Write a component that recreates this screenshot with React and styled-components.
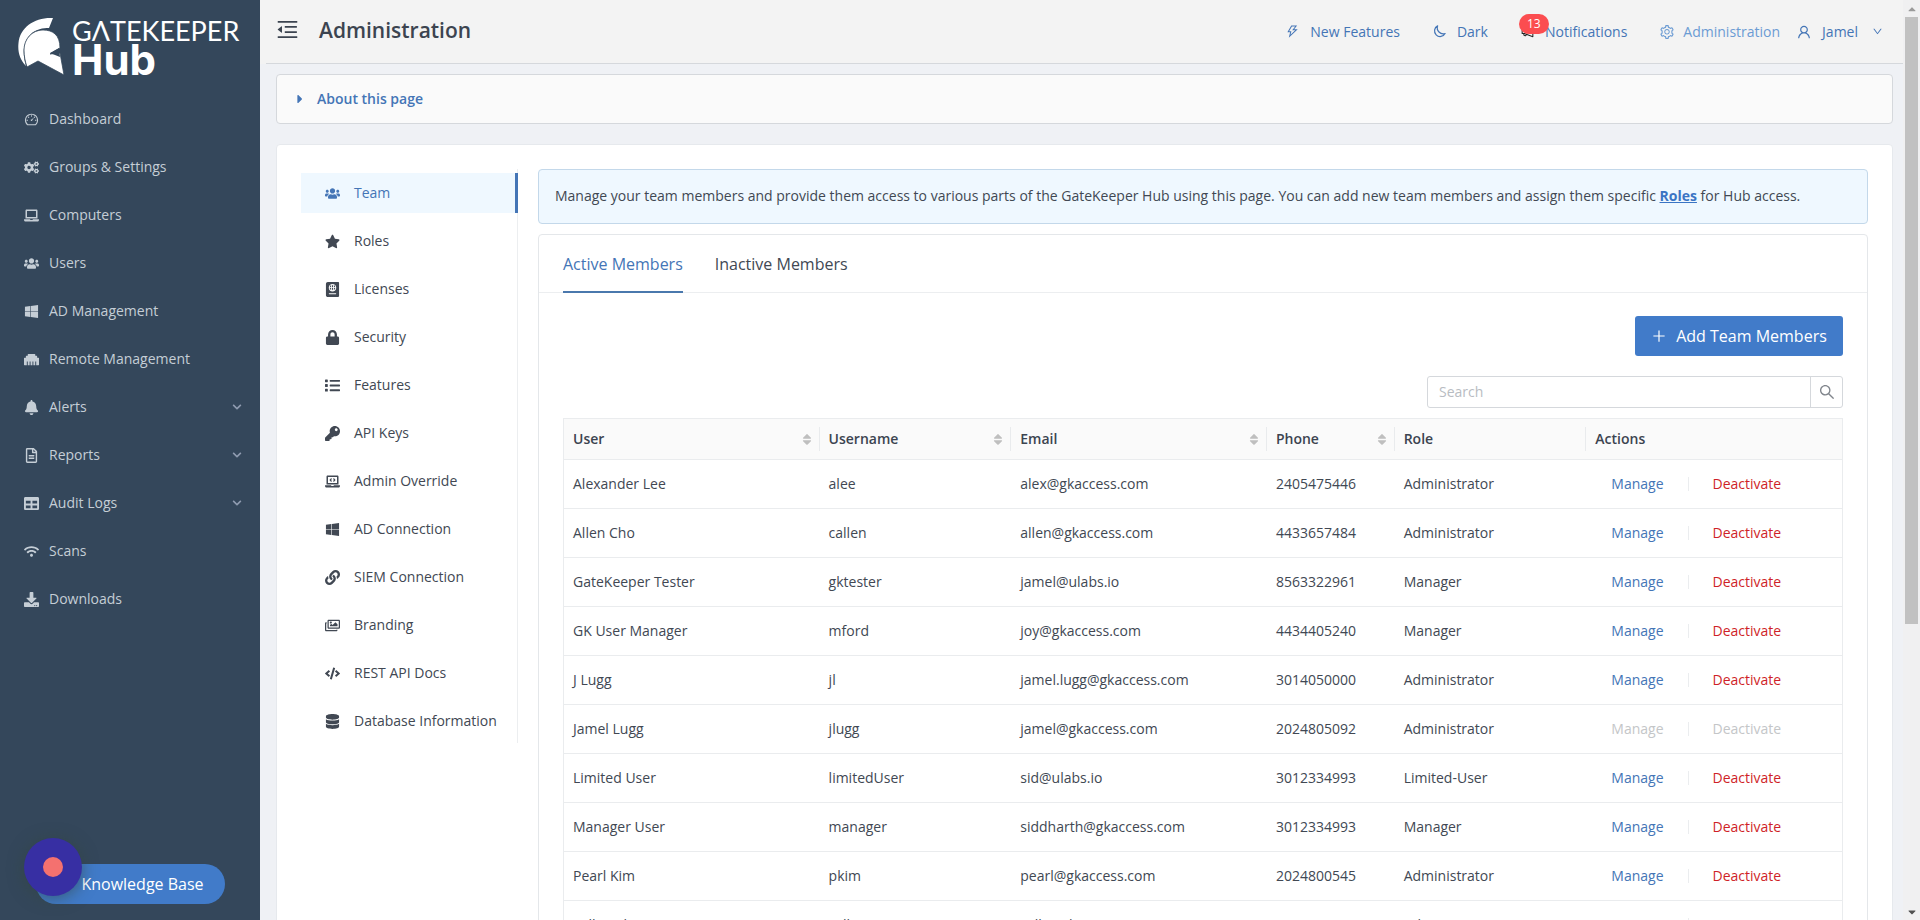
import React, { useState } from "react";
import styled, { createGlobalStyle } from "styled-components";
import {
  AiOutlineDashboard,
  AiOutlineDown,
  AiOutlineMenuFold,
  AiOutlineNotification,
  AiOutlinePlus,
  AiOutlineSearch,
  AiOutlineSetting,
  AiOutlineThunderbolt,
  AiOutlineUser,
} from "react-icons/ai";
import {
  FaBell,
  FaCaretDown,
  FaCaretRight,
  FaCaretUp,
  FaChevronDown,
  FaCode,
  FaCogs,
  FaDatabase,
  FaDownload,
  FaEthernet,
  FaKey,
  FaLaptop,
  FaLaptopCode,
  FaLink,
  FaList,
  FaLock,
  FaPassport,
  FaRegFileAlt,
  FaRegImages,
  FaStar,
  FaTable,
  FaUsers,
  FaWifi,
  FaWindows,
} from "react-icons/fa";

const navItems = [
  { label: "Dashboard", icon: AiOutlineDashboard },
  { label: "Groups & Settings", icon: FaCogs },
  { label: "Computers", icon: FaLaptop },
  { label: "Users", icon: FaUsers },
  { label: "AD Management", icon: FaWindows },
  { label: "Remote Management", icon: FaEthernet },
  { label: "Alerts", icon: FaBell, sub: true },
  { label: "Reports", icon: FaRegFileAlt, sub: true },
  { label: "Audit Logs", icon: FaTable, sub: true },
  { label: "Scans", icon: FaWifi },
  { label: "Downloads", icon: FaDownload },
];

const adminItems = [
  { label: "Team", icon: FaUsers },
  { label: "Roles", icon: FaStar },
  { label: "Licenses", icon: FaPassport },
  { label: "Security", icon: FaLock },
  { label: "Features", icon: FaList },
  { label: "API Keys", icon: FaKey },
  { label: "Admin Override", icon: FaLaptopCode },
  { label: "AD Connection", icon: FaWindows },
  { label: "SIEM Connection", icon: FaLink },
  { label: "Branding", icon: FaRegImages },
  { label: "REST API Docs", icon: FaCode },
  { label: "Database Information", icon: FaDatabase },
];

const columns = [
  { label: "User", width: "20%", sort: true },
  { label: "Username", width: "15%", sort: true },
  { label: "Email", width: "20%", sort: true },
  { label: "Phone", width: "10%", sort: true },
  { label: "Role", width: "15%" },
  { label: "Actions", width: "20%" },
];

const members = [
  ["Alexander Lee", "alee", "alex@gkaccess.com", "2405475446", "Administrator"],
  ["Allen Cho", "callen", "allen@gkaccess.com", "4433657484", "Administrator"],
  ["GateKeeper Tester", "gktester", "jamel@ulabs.io", "8563322961", "Manager"],
  ["GK User Manager", "mford", "joy@gkaccess.com", "4434405240", "Manager"],
  ["J Lugg", "jl", "jamel.lugg@gkaccess.com", "3014050000", "Administrator"],
  ["Jamel Lugg", "jlugg", "jamel@gkaccess.com", "2024805092", "Administrator"],
  ["Limited User", "limitedUser", "sid@ulabs.io", "3012334993", "Limited-User"],
  ["Manager User", "manager", "siddharth@gkaccess.com", "3012334993", "Manager"],
  ["Pearl Kim", "pkim", "pearl@gkaccess.com", "2024800545", "Administrator"],
  ["Sally Cole", "sally", "sally@gkaccess.com", "2026768484", "Administrator"],
];
const currentUser = "jlugg";

const GlobalStyle = createGlobalStyle`
  * {
    box-sizing: border-box;
  }
  body {
    margin: 0;
    overflow: hidden;
    background: #eff1f5;
    color: #414853;
    font-family: "Open Sans", "Noto Sans", sans-serif;
    font-size: 14px;
    line-height: 20px;
  }
  button, input {
    font: inherit;
  }
  a {
    color: inherit;
    text-decoration: none;
  }
  svg {
    flex: none;
  }
`;

const Shell = styled.div`
  display: grid;
  grid-template-columns: 260px minmax(0, 1fr) 17px;
  height: 100vh;
`;
const Sidebar = styled.aside`
  display: flex;
  flex-direction: column;
  min-height: 0;
  background: #34475b;
  color: #c5ced6;
`;
const Logo = styled.a`
  display: flex;
  gap: 8px;
  padding: 17px 0 0 18px;
  height: 95px;
  color: #fff;
`;
const LogoName = styled.span`
  display: flex;
  flex-direction: column;
`;
const LogoTop = styled.span`
  font-family: Lato, sans-serif;
  font-size: 27px;
  line-height: 28px;
`;
const LogoBottom = styled.span`
  font-family: Inter, sans-serif;
  font-size: 42px;
  font-weight: 700;
  line-height: 30px;
`;
const SideNav = styled.nav`
  display: flex;
  flex-direction: column;
`;
const SideLink = styled.a`
  display: flex;
  align-items: center;
  gap: 10px;
  height: 48px;
  padding: 0 18px 0 24px;
`;
const SideLabel = styled.span`
  flex: 1;
`;
const SideFooter = styled.div`
  position: relative;
  margin-top: auto;
  padding: 0 35px 16px 36px;
`;
const KnowledgeButton = styled.button`
  width: 100%;
  height: 40px;
  padding: 0 20px 0 44px;
  border: 0;
  border-radius: 20px;
  background: #417bc9;
  color: #fff;
  font-size: 16px;
  white-space: nowrap;
`;
const RecordButton = styled.button`
  position: absolute;
  left: 24px;
  bottom: 24px;
  display: grid;
  place-items: center;
  width: 58px;
  height: 58px;
  border: 0;
  border-radius: 50%;
  background: #372fa3;
  box-shadow: 0 2px 16px rgba(50, 70, 60, 0.6);
`;
const RecordDot = styled.span`
  width: 20px;
  height: 20px;
  border-radius: 50%;
  background: #f4716f;
`;
const Main = styled.main`
  overflow: hidden;
`;
const Header = styled.header`
  display: flex;
  align-items: center;
  height: 64px;
  margin-left: 6px;
  padding: 0 20px 4px 9px;
  border-bottom: 1px solid #d5d8dc;
  background: #f3f3f3;
  box-shadow: -6px 0 0 #f3f3f3;
`;
const FoldButton = styled.button`
  display: flex;
  padding: 0;
  border: 0;
  background: none;
  color: #3c4450;
  font-size: 25px;
`;
const PageTitle = styled.h1`
  margin: 0 0 0 19px;
  font-size: 21px;
  line-height: 32px;
  font-weight: 600;
  color: #3c4450;
`;
const TopNav = styled.nav`
  display: flex;
  align-items: center;
  gap: 32px;
  margin-left: auto;
  padding-top: 4px;
`;
const TopLink = styled.a`
  position: relative;
  display: flex;
  align-items: center;
  gap: ${(props) => (props.$active ? "8px" : "10px")};
  color: ${(props) => (props.$active ? "#6b9bd3" : "#4475b6")};
`;
const UserArea = styled.div`
  display: flex;
  gap: 16px;
`;
const UserName = styled.span`
  padding-right: 4px;
`;
const Badge = styled.span`
  position: absolute;
  left: -1px;
  top: -8px;
  min-width: 29px;
  padding: 0 8px;
  border-radius: 10px;
  background: #fb4d50;
  color: #fff;
  font-size: 12px;
  line-height: 20px;
  text-align: center;
`;
const Dark = styled.span`
  display: flex;
  color: #222;
`;
const Page = styled.div`
  display: flex;
  flex-direction: column;
  gap: 20px;
  padding: 10px 10px 24px 16px;
`;
const AboutPanel = styled.section`
  border: 1px solid #d5d8dc;
  border-radius: 4px;
  background: #fafafa;
`;
const AboutButton = styled.button`
  display: flex;
  align-items: center;
  gap: 10px;
  width: 100%;
  height: 48px;
  padding: 0 16px;
  border: 0;
  background: none;
  color: #4475b6;
  font-weight: 600;
`;
const Card = styled.section`
  display: flex;
  align-items: flex-start;
  gap: 20px;
  padding: 24px;
  border: 1px solid #e6e9ed;
  border-radius: 4px;
  background: #fff;
`;
const AdminMenu = styled.nav`
  display: flex;
  flex-direction: column;
  gap: 8px;
  width: 217px;
  padding: 4px 0 2px;
  border-right: 1px solid #eceef0;
`;
const AdminLink = styled.a`
  display: flex;
  align-items: center;
  gap: 14px;
  height: 40px;
  margin-right: -1px;
  padding-left: 24px;
  border-right: 3px solid ${(props) => (props.$active ? "#4475b6" : "transparent")};
  background: ${(props) => (props.$active ? "#eff8ff" : "none")};
  background-clip: padding-box;
  color: ${(props) => (props.$active ? "#4475b6" : "#414853")};
`;
const Content = styled.div`
  display: flex;
  flex: 1;
  flex-direction: column;
  gap: 10px;
  min-width: 0;
`;
const Alert = styled.p`
  margin: 0;
  padding: 16px 16px 17px;
  border: 1px solid #c3d8ea;
  border-radius: 4px;
  background: #eff8ff;
`;
const RolesLink = styled.a`
  color: #3a74c4;
  font-weight: 700;
  text-decoration: underline;
`;
const MembersCard = styled.section`
  border: 1px solid #e4e7ea;
  border-radius: 4px;
`;
const Tabs = styled.div`
  display: flex;
  gap: 32px;
  height: 58px;
  padding: 0 24px;
  border-bottom: 1px solid #eceef0;
`;
const Tab = styled.button`
  height: 58px;
  padding: 2px 0 0;
  border: 0;
  border-bottom: 2px solid ${(props) => (props.$active ? "#4a78ad" : "transparent")};
  background: none;
  color: ${(props) => (props.$active ? "#4475b6" : "#414853")};
  font-size: 16px;
`;
const MembersBody = styled.div`
  display: flex;
  flex-direction: column;
  align-items: flex-end;
  padding: 23px 24px 24px;
`;
const AddButton = styled.button`
  display: flex;
  align-items: center;
  justify-content: center;
  gap: 9px;
  width: 208px;
  height: 40px;
  border: 0;
  border-radius: 3px;
  background: #417bc9;
  color: #fff;
  font-size: 16px;
`;
const SearchBox = styled.form`
  display: flex;
  width: 416px;
  height: 32px;
  margin: 20px 0 10px;
  border: 1px solid #d5d8dc;
  border-radius: 3px;
`;
const SearchInput = styled.input`
  flex: 1;
  min-width: 0;
  padding: 0 11px;
  border: 0;
  background: none;
  &::placeholder {
    color: #b8bcc2;
  }
`;
const SearchButton = styled.button`
  display: grid;
  place-items: center;
  width: 32px;
  padding: 0;
  border: 0;
  border-left: 1px solid #d5d8dc;
  background: none;
  color: #80858c;
  font-size: 18px;
`;
const Table = styled.table`
  width: 100%;
  table-layout: fixed;
  border: 1px solid #eaecee;
  border-collapse: separate;
  border-spacing: 0;
`;
const Th = styled.th`
  width: ${(props) => props.$width};
  height: 41px;
  padding: 8px 0;
  border-bottom: 1px solid #eaecee;
  background: #fafafa;
  color: #3c4450;
  font-weight: 600;
  text-align: left;
`;
const ThInner = styled.div`
  display: flex;
  align-items: center;
  justify-content: space-between;
  height: 24px;
  padding: 0 5px 0 9px;
  border-right: 1px solid #e9ebed;
  ${Th}:last-child & {
    border-right: 0;
  }
`;
const SortIcon = styled.span`
  display: flex;
  flex-direction: column;
  color: #bfbfbf;
  svg + svg {
    margin-top: -8px;
  }
`;
const Td = styled.td`
  height: 49px;
  padding: 0 9px;
  border-bottom: 1px solid #eaecee;
`;
const Actions = styled.div`
  display: flex;
  align-items: center;
`;
const ActionButton = styled.button`
  padding: 0 16px;
  border: 0;
  background: none;
  color: ${(props) => (props.$danger ? "#cf1f28" : "#4475b6")};
  &:disabled {
    color: #c4c6c8;
  }
`;
const Divider = styled.span`
  width: 1px;
  height: 14px;
  margin: 0 8px;
  background: #ebedef;
`;
const ScrollTrack = styled.div`
  display: flex;
  flex-direction: column;
  align-items: center;
  justify-content: space-between;
  background: #f0f0f1;
  font-size: 12px;
`;
const ScrollThumb = styled.div`
  flex: 0 0 66%;
  width: 13px;
  margin-bottom: auto;
  background: #c1c1c1;
`;
const ScrollArrow = styled.span`
  display: grid;
  place-items: center;
  height: 17px;
  color: ${(props) => (props.$dark ? "#505050" : "#9a9a9a")};
`;

const Helmet = () => (
  <svg width="46" height="60" viewBox="0 0 46 60" fill="#fff" aria-hidden="true">
    <path d="M35 1C17 0 2 10 0.5 26C-.5 35 2 43 8 49C4 36 5 24 13 17C18 12 25 11 31 11Z" />
    <path
      d="M8 49L9 50L20 44L46 58L42 36L32 37L42 31C42 18 35 13 25 13C14 13 6 22 6 33C6 39 7 44 9 50Z"
      stroke="#34475b"
      strokeWidth="0.8"
    />
    <path d="M32 36L41 31L42 40Z" fill="#34475b" />
  </svg>
);

const Moon = () => (
  <svg width="15" height="15" viewBox="0 0 16 16" fill="none" stroke="currentColor" strokeWidth="1.3" aria-hidden="true">
    <path d="M6 2A6 6 0 1 0 14 10.2A6.4 6.4 0 0 1 6 2Z" strokeLinejoin="round" />
  </svg>
);

const MemberRow = ({ member }) => {
  const locked = member[1] === currentUser;
  return (
    <tr>
      {member.map((value, index) => (
        <Td key={index}>{value}</Td>
      ))}
      <Td>
        <Actions>
          <ActionButton disabled={locked}>Manage</ActionButton>
          <Divider />
          <ActionButton $danger disabled={locked}>
            Deactivate
          </ActionButton>
        </Actions>
      </Td>
    </tr>
  );
};

const App = () => {
  const [section, setSection] = useState("Team");
  const [tab, setTab] = useState("Active Members");
  return (
    <>
      <GlobalStyle />
      <Shell>
        <Sidebar>
          <Logo href="#">
            <Helmet />
            <LogoName>
              <LogoTop>GΛTEKEEPER</LogoTop>
              <LogoBottom>Hub</LogoBottom>
            </LogoName>
          </Logo>
          <SideNav>
            {navItems.map(({ label, icon: Icon, sub }) => (
              <SideLink href="#" key={label}>
                <Icon size={15} />
                <SideLabel>{label}</SideLabel>
                {sub && <FaChevronDown size={10} color="#8f9bb0" />}
              </SideLink>
            ))}
          </SideNav>
          <SideFooter>
            <KnowledgeButton>Knowledge Base</KnowledgeButton>
            <RecordButton aria-label="Record">
              <RecordDot />
            </RecordButton>
          </SideFooter>
        </Sidebar>
        <Main>
          <Header>
            <FoldButton aria-label="Collapse menu">
              <AiOutlineMenuFold />
            </FoldButton>
            <PageTitle>Administration</PageTitle>
            <TopNav>
              <TopLink href="#">
                <AiOutlineThunderbolt size={15} />
                New Features
              </TopLink>
              <TopLink href="#">
                <Moon />
                Dark
              </TopLink>
              <TopLink href="#">
                <Dark>
                  <AiOutlineNotification size={15} />
                </Dark>
                <Badge>13</Badge>
                Notifications
              </TopLink>
              <UserArea>
                <TopLink href="#" $active>
                  <AiOutlineSetting size={16} />
                  Administration
                </TopLink>
                <TopLink href="#">
                  <AiOutlineUser size={16} />
                  <UserName>Jamel</UserName>
                  <AiOutlineDown size={11} />
                </TopLink>
              </UserArea>
            </TopNav>
          </Header>
          <Page>
            <AboutPanel>
              <AboutButton>
                <FaCaretRight size={14} />
                About this page
              </AboutButton>
            </AboutPanel>
            <Card>
              <AdminMenu>
                {adminItems.map(({ label, icon: Icon }) => (
                  <AdminLink
                    href="#"
                    key={label}
                    $active={section === label}
                    onClick={() => setSection(label)}
                  >
                    <Icon size={15} />
                    {label}
                  </AdminLink>
                ))}
              </AdminMenu>
              <Content>
                <Alert>
                  Manage your team members and provide them access to various
                  parts of the GateKeeper Hub using this page. You can add new
                  team members and assign them specific{" "}
                  <RolesLink href="#">Roles</RolesLink> for Hub access.
                </Alert>
                <MembersCard>
                  <Tabs>
                    {["Active Members", "Inactive Members"].map((name) => (
                      <Tab
                        key={name}
                        $active={tab === name}
                        onClick={() => setTab(name)}
                      >
                        {name}
                      </Tab>
                    ))}
                  </Tabs>
                  <MembersBody>
                    <AddButton>
                      <AiOutlinePlus size={16} />
                      Add Team Members
                    </AddButton>
                    <SearchBox>
                      <SearchInput placeholder="Search" aria-label="Search" />
                      <SearchButton type="button" aria-label="Search members">
                        <AiOutlineSearch />
                      </SearchButton>
                    </SearchBox>
                    <Table>
                      <thead>
                        <tr>
                          {columns.map(({ label, width, sort }) => (
                            <Th key={label} $width={width}>
                              <ThInner>
                                {label}
                                {sort && (
                                  <SortIcon>
                                    <FaCaretUp size={14} />
                                    <FaCaretDown size={14} />
                                  </SortIcon>
                                )}
                              </ThInner>
                            </Th>
                          ))}
                        </tr>
                      </thead>
                      <tbody>
                        {members.map((member) => (
                          <MemberRow key={member[1]} member={member} />
                        ))}
                      </tbody>
                    </Table>
                  </MembersBody>
                </MembersCard>
              </Content>
            </Card>
          </Page>
        </Main>
        <ScrollTrack aria-hidden="true">
          <ScrollArrow>
            <FaCaretUp />
          </ScrollArrow>
          <ScrollThumb />
          <ScrollArrow $dark>
            <FaCaretDown />
          </ScrollArrow>
        </ScrollTrack>
      </Shell>
    </>
  );
};
export default App;
